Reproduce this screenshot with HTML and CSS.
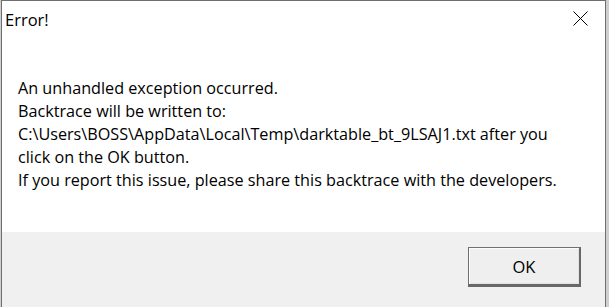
FILE: index.html
```html
<!DOCTYPE html>
<html lang="en">
<head>
<meta charset="utf-8">
<title>Error!</title>
<link rel="stylesheet" href="styles.css">
</head>
<body>
<div class="window">
  <div class="main">
    <div class="titlebar">
      <div class="title">Error!</div>
      <div class="close" aria-label="Close">
        <svg width="15" height="15" viewBox="0 0 15 15"><path d="M0.5 0.5 L14.5 14.5 M14.5 0.5 L0.5 14.5" stroke="#000" stroke-width="1" fill="none"/></svg>
      </div>
    </div>
    <div class="message">
      <div>An unhandled exception occurred.</div>
      <div>Backtrace will be written to:</div>
      <div>C:\Users\BOSS\AppData\Local\Temp\darktable_bt_9LSAJ1.txt after you</div>
      <div>click on the OK button.</div>
      <div>If you report this issue, please share this backtrace with the developers.</div>
    </div>
  </div>
  <div class="footer">
    <button class="ok">OK</button>
  </div>
</div>
</body>
</html>
```

FILE: styles.css
```css
html, body {
  margin: 0;
  padding: 0;
}
body {
  width: 609px;
  height: 307px;
  background: #cfcfcf;
  overflow: hidden;
  font-family: "Open Sans", "Noto Sans", sans-serif;
  font-size: 16.2px;
  color: #000;
}
.window {
  margin-left: 1px;
  width: 603px;
  height: 306px;
  border: 1px solid #6f6f6f;
  border-bottom: none;
  display: flex;
  flex-direction: column;
  background: #fff;
}
.main {
  height: 231px;
  background: #fff;
  display: flex;
  flex-direction: column;
}
.titlebar {
  display: flex;
  justify-content: space-between;
  align-items: flex-start;
  height: 30px;
}
.title {
  padding: 7px 0 0 3px;
  line-height: 23px;
  font-size: 16.5px;
}
.close {
  padding: 10px 17px 0 0;
  line-height: 0;
}
.message {
  margin-top: 46px;
  padding-left: 16px;
  line-height: 23px;
  white-space: nowrap;
}
.footer {
  flex: 1;
  background: #f0f0f0;
  display: flex;
  justify-content: flex-end;
  align-items: flex-start;
  padding: 15px 24px 0 0;
}
.ok {
  width: 113px;
  height: 40px;
  box-sizing: border-box;
  background: #efefef;
  border: 1px solid #707070;
  border-right: 2px solid #686868;
  border-bottom: 3px solid #686868;
  box-shadow: inset 1px 1px 0 #fcfcfc, inset -1px -1px 0 #e2e2e2;
  font-family: "Open Sans", "Noto Sans", sans-serif;
  font-size: 16.5px;
  color: #000;
  padding: 0;
}
```
